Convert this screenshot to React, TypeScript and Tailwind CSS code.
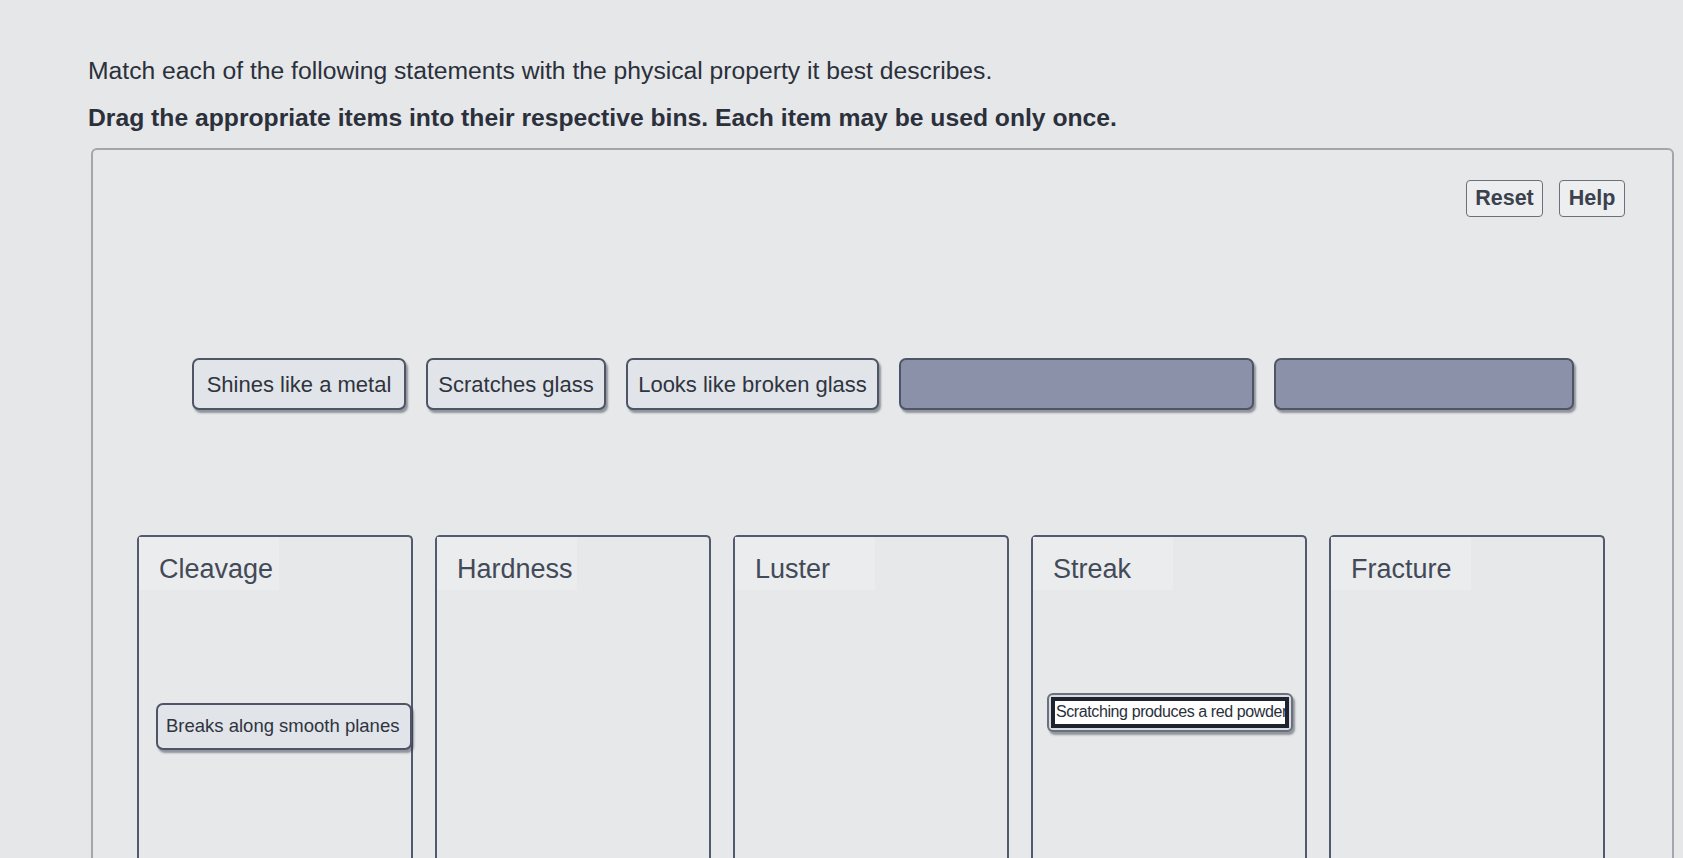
import React from 'react';

const font = { fontFamily: '"Liberation Sans", Arial, Helvetica, sans-serif' };

const Chip: React.FC<{ label: string; className?: string }> = ({ label, className = '' }) => (
  <div
    className={`flex h-[52px] items-center justify-center whitespace-nowrap rounded-[7px] border-[2.5px] border-[#4d5567] bg-[#e1e4e8] text-[22px] text-[#2f3440] shadow-[2px_3px_2px_rgba(40,46,60,0.45)] ${className}`}
  >
    {label}
  </div>
);

const Slot: React.FC<{ className?: string }> = ({ className = '' }) => (
  <div
    className={`h-[52px] rounded-[7px] border-[2.5px] border-[#4d5567] bg-[#8a91a9] shadow-[2px_3px_2px_rgba(40,46,60,0.45)] ${className}`}
  />
);

const Bin: React.FC<{ title: string; children?: React.ReactNode }> = ({ title, children }) => (
  <div className="h-[340px] w-[276px] rounded-t-[5px] border-[2px] border-b-0 border-[#525a70]">
    <div className="w-[140px] bg-[#eaecee] pl-[20px] pt-[12px] text-[27px] text-[#434a57]">{title}</div>
    {children}
  </div>
);

export default function App() {
  return (
    <div className="h-[858px] w-[1683px] overflow-hidden bg-[#e5e7e9]" style={font}>
      <div className="pl-[88px] pt-[56px] text-[#2b303b]">
        <p className="text-[24.7px] leading-[30px]">
          Match each of the following statements with the physical property it best describes.
        </p>
        <p className="mt-[17px] text-[24.7px] font-bold leading-[30px]">
          Drag the appropriate items into their respective bins. Each item may be used only once.
        </p>
      </div>

      <div className="ml-[91px] mr-[9px] mt-[15px] h-[760px] rounded-[6px] border-[2px] border-[#a3a7ad] bg-[#e6e8ea]">
        <div className="flex justify-end gap-[16px] pr-[47px] pt-[30px]">
          <button className="h-[37px] w-[77px] rounded-[4px] border-[1.5px] border-[#6b717c] bg-[#eceef0] text-[21.5px] font-bold text-[#3b414d]">
            Reset
          </button>
          <button className="h-[37px] w-[66px] rounded-[4px] border-[1.5px] border-[#6b717c] bg-[#eceef0] text-[21.5px] font-bold text-[#3b414d]">
            Help
          </button>
        </div>

        <div className="mt-[141px] flex items-center gap-[20px] pl-[99px]">
          <Chip label="Shines like a metal" className="w-[214px]" />
          <Chip label="Scratches glass" className="w-[180px]" />
          <Chip label="Looks like broken glass" className="w-[253px]" />
          <Slot className="w-[355px]" />
          <Slot className="w-[300px]" />
        </div>

        <div className="mt-[125px] flex gap-[22px] pl-[44px]">
          <Bin title="Cleavage">
            <div className="mt-[113px] pl-[17px]">
              <div className="flex h-[47px] w-[256px] items-center whitespace-nowrap rounded-[7px] border-[2.5px] border-[#4d5567] bg-[#e1e4e8] px-[8px] text-[18.5px] text-[#2f3440] shadow-[2px_3px_2px_rgba(40,46,60,0.45)]">
                Breaks along smooth planes
              </div>
            </div>
          </Bin>
          <Bin title="Hardness" />
          <Bin title="Luster" />
          <Bin title="Streak">
            <div className="mt-[103px] pl-[14px]">
              <div className="w-[246px] rounded-[6px] border-[2px] border-[#6b717c] bg-[#d9dce0] p-[2px] shadow-[2px_3px_2px_rgba(40,46,60,0.45)]">
                <div className="flex h-[31px] items-center overflow-hidden whitespace-nowrap border-[4px] border-[#1e2330] bg-white px-[1px] text-[16px] tracking-[-0.4px] text-[#2a2f3a]">
                  Scratching produces a red powder
                </div>
              </div>
            </div>
          </Bin>
          <Bin title="Fracture" />
        </div>
      </div>
    </div>
  );
}
